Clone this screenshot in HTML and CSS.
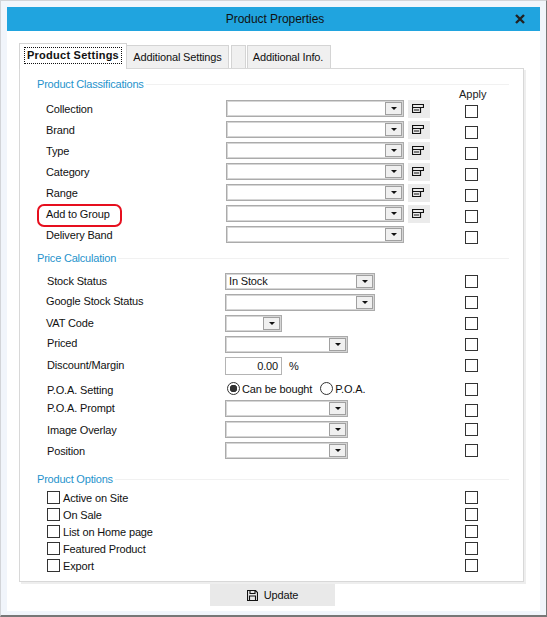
FILE: index.html
```html
<!DOCTYPE html>
<html>
  <head>
    <title>Product Properties</title>
    <link rel="stylesheet" href="styles.css">
  </head>
  <body>
    <div class="frame">
      <div class="window">
        <div class="titlebar">
          <span class="title">Product Properties</span>
          <svg class="close" width="10" height="10" viewBox="0 0 10 10">
            <path d="M1 1 L9 9 M9 1 L1 9" stroke="#222" stroke-width="2.4" fill="none" />
          </svg>
        </div>

        <div class="tabs">
          <div class="tab active"><span class="focus">Product Settings</span></div>
          <div class="tab second">Additional Settings</div>
          <div class="tab blank"></div>
          <div class="tab fourth">Additional Info.</div>
        </div>

        <div class="panel">
          <div class="legend"><span>Product Classifications</span><i></i></div>
          <div class="applyhead">Apply</div>

          <div class="row classif">
            <label>Collection</label>
            <div class="field"><div class="combo w178"><b></b></div><div class="iconbtn"><svg width="12" height="9" viewBox="0 0 12 9"><path d="M0.5 0.5 H11.5 V3.5 H8.5 V8.5 H0.5 Z M0.5 3.5 H8.5 M2 6 H7" stroke="#111" stroke-width="1.2" fill="none" /></svg></div></div>
            <div class="chk"></div>
          </div>
          <div class="row classif">
            <label>Brand</label>
            <div class="field"><div class="combo w178"><b></b></div><div class="iconbtn"><svg width="12" height="9" viewBox="0 0 12 9"><path d="M0.5 0.5 H11.5 V3.5 H8.5 V8.5 H0.5 Z M0.5 3.5 H8.5 M2 6 H7" stroke="#111" stroke-width="1.2" fill="none" /></svg></div></div>
            <div class="chk"></div>
          </div>
          <div class="row classif">
            <label>Type</label>
            <div class="field"><div class="combo w178"><b></b></div><div class="iconbtn"><svg width="12" height="9" viewBox="0 0 12 9"><path d="M0.5 0.5 H11.5 V3.5 H8.5 V8.5 H0.5 Z M0.5 3.5 H8.5 M2 6 H7" stroke="#111" stroke-width="1.2" fill="none" /></svg></div></div>
            <div class="chk"></div>
          </div>
          <div class="row classif">
            <label>Category</label>
            <div class="field"><div class="combo w178"><b></b></div><div class="iconbtn"><svg width="12" height="9" viewBox="0 0 12 9"><path d="M0.5 0.5 H11.5 V3.5 H8.5 V8.5 H0.5 Z M0.5 3.5 H8.5 M2 6 H7" stroke="#111" stroke-width="1.2" fill="none" /></svg></div></div>
            <div class="chk"></div>
          </div>
          <div class="row classif">
            <label>Range</label>
            <div class="field"><div class="combo w178"><b></b></div><div class="iconbtn"><svg width="12" height="9" viewBox="0 0 12 9"><path d="M0.5 0.5 H11.5 V3.5 H8.5 V8.5 H0.5 Z M0.5 3.5 H8.5 M2 6 H7" stroke="#111" stroke-width="1.2" fill="none" /></svg></div></div>
            <div class="chk"></div>
          </div>
          <div class="row classif">
            <label class="ringed">Add to Group</label>
            <div class="field"><div class="combo w178"><b></b></div><div class="iconbtn"><svg width="12" height="9" viewBox="0 0 12 9"><path d="M0.5 0.5 H11.5 V3.5 H8.5 V8.5 H0.5 Z M0.5 3.5 H8.5 M2 6 H7" stroke="#111" stroke-width="1.2" fill="none" /></svg></div></div>
            <div class="chk"></div>
          </div>
          <div class="row classif">
            <label>Delivery Band</label>
            <div class="field"><div class="combo w178"><b></b></div></div>
            <div class="chk"></div>
          </div>

          <div class="legend price-legend"><span>Price Calculation</span><i></i></div>

          <div class="row price">
            <label class="nudge">Stock Status</label>
            <div class="field"><div class="combo w150">In Stock<b></b></div></div>
            <div class="chk"></div>
          </div>
          <div class="row price">
            <label class="up">Google Stock Status</label>
            <div class="field"><div class="combo w150"><b></b></div></div>
            <div class="chk"></div>
          </div>
          <div class="row price">
            <label>VAT Code</label>
            <div class="field"><div class="combo w57"><b></b></div></div>
            <div class="chk"></div>
          </div>
          <div class="row price">
            <label class="nudge up">Priced</label>
            <div class="field"><div class="combo w123"><b></b></div></div>
            <div class="chk"></div>
          </div>
          <div class="row price">
            <label class="nudge">Discount/Margin</label>
            <div class="field"><div class="amount">0.00</div><span class="pct">%</span></div>
            <div class="chk"></div>
          </div>
          <div class="row price poa">
            <label class="nudge down">P.O.A. Setting</label>
            <div class="field radios">
              <span class="radio on"></span><span class="rtext">Can be bought</span>
              <span class="radio"></span><span class="rtext">P.O.A.</span>
            </div>
            <div class="chk"></div>
          </div>
          <div class="row price">
            <label class="nudge">P.O.A. Prompt</label>
            <div class="field"><div class="combo w123"><b></b></div></div>
            <div class="chk low"></div>
          </div>
          <div class="row price">
            <label class="nudge level">Image Overlay</label>
            <div class="field"><div class="combo w123"><b></b></div></div>
            <div class="chk"></div>
          </div>
          <div class="row price">
            <label class="nudge level">Position</label>
            <div class="field"><div class="combo w123"><b></b></div></div>
            <div class="chk"></div>
          </div>

          <div class="legend options-legend"><span>Product Options</span><i></i></div>

          <div class="optrows">
            <div class="row option"><div class="opt"><div class="chk"></div><label>Active on Site</label></div><div class="chk"></div></div>
            <div class="row option"><div class="opt"><div class="chk"></div><label>On Sale</label></div><div class="chk"></div></div>
            <div class="row option"><div class="opt"><div class="chk"></div><label>List on Home page</label></div><div class="chk"></div></div>
            <div class="row option"><div class="opt"><div class="chk"></div><label>Featured Product</label></div><div class="chk"></div></div>
            <div class="row option"><div class="opt"><div class="chk"></div><label>Export</label></div><div class="chk"></div></div>
          </div>
        </div>

        <div class="footer">
          <div class="update">
            <svg width="11" height="11" viewBox="0 0 11 11"><path d="M0.5 0.5 H8.5 L10.5 2.5 V10.5 H0.5 Z M3 0.5 V3.5 H8 V0.5 M2.5 10.5 V6 H8.5 V10.5" stroke="#111" stroke-width="1.1" fill="none" /></svg>
            <span>Update</span>
          </div>
        </div>
      </div>
    </div>
  </body>
</html>
```

FILE: styles.css
```css
html,
body {
  margin: 0;
  padding: 0;
}

body {
  font-family: "Liberation Sans", Arial, sans-serif;
  font-size: 11px;
  letter-spacing: -0.15px;
  color: #111;
}

.frame {
  box-sizing: border-box;
  width: 547px;
  height: 617px;
  padding: 6px 6px 4px 6px;
  background: #f1f5fb;
  border-top: 1px solid #d2d4d8;
  border-left: 1px solid #d2d4d8;
  border-right: 1px solid #777;
  border-bottom: 2px solid #777;
}

.window {
  height: 604px;
  background: #fff;
}

.titlebar {
  height: 24px;
  background: #20a4df;
  display: flex;
  align-items: center;
  justify-content: center;
  padding-left: 3px;
  position: relative;
}

.title {
  font-size: 12px;
  letter-spacing: -0.05px;
  color: #111;
}

.close {
  position: absolute;
  right: 15px;
  top: 7px;
}

.tabs {
  display: flex;
  align-items: flex-end;
  height: 25px;
  margin: 12px 0 0 12px;
  position: relative;
  z-index: 1;
}

.tab {
  box-sizing: border-box;
  height: 23px;
  line-height: 22px;
  background: #f0f0f0;
  border: 1px solid #d4d4d4;
  border-bottom: none;
  text-align: center;
}

.tab.active {
  width: 108px;
  height: 26px;
  margin-bottom: -1px;
  padding-top: 3px;
  background: #fff;
  font-weight: bold;
  letter-spacing: 0.25px;
  line-height: 15px;
}

.focus {
  display: inline-block;
  padding: 0 2px;
  border: 1px dotted #111;
}

.tab.second {
  width: 102px;
  border-left: none;
}

.tab.blank {
  width: 15px;
  margin-left: 2px;
}

.tab.fourth {
  width: 84px;
  margin-left: 1px;
  padding-right: 2px;
}

.panel {
  box-sizing: border-box;
  width: 505px;
  height: 514px;
  margin-left: 12px;
  padding-top: 7px;
  border: 1px solid #d8d8d8;
  box-shadow: 2px 2px 0 #eeeeee;
}

.legend {
  display: flex;
  align-items: center;
  height: 16px;
  padding-left: 17px;
  margin-right: 14px;
  letter-spacing: -0.2px;
  color: #1f93cc;
}

.legend i {
  flex: 1;
  height: 1px;
  margin-left: 2px;
  background: #f1f1f1;
}

.price-legend {
  margin: 5px 14px 5px 0;
}

.options-legend {
  margin-top: 10px;
}

.applyhead {
  height: 8px;
  margin-top: -2px;
  line-height: 8px;
  padding-left: 439px;
  letter-spacing: 0;
  color: #222;
}

.row {
  box-sizing: border-box;
  display: grid;
  height: 21px;
  padding-left: 26px;
  align-items: center;
}

.classif {
  grid-template-columns: 180px 239px 13px;
}

.classif .chk {
  margin-top: 6px;
}

.price {
  grid-template-columns: 179px 240px 13px;
}

.price label {
  padding-bottom: 2px;
}

.price label.up {
  padding-bottom: 4px;
}

.price label.down {
  padding: 2px 0 0 1px;
}

.price label.level {
  padding-bottom: 0;
}

.poa {
  height: 22px;
  padding-top: 4px;
}

.nudge {
  padding-left: 1px;
}

.field {
  display: flex;
  align-items: center;
}

.combo {
  box-sizing: border-box;
  height: 17px;
  line-height: 15px;
  padding-left: 3px;
  border: 1px solid #ababab;
  box-shadow: inset 0 0 0 1px #d6d6d6;
  position: relative;
}

.combo b {
  position: absolute;
  right: 1px;
  top: 1px;
  box-sizing: border-box;
  width: 17px;
  height: 13px;
  background: #f0f0f0;
  border: 1px solid #a0a0a0;
}

.combo b::after {
  content: "";
  position: absolute;
  left: 5px;
  top: 4px;
  border-left: 3px solid transparent;
  border-right: 3px solid transparent;
  border-top: 3px solid #111;
}

.w178 {
  width: 178px;
}

.w150 {
  width: 150px;
}

.w123 {
  width: 123px;
}

.w57 {
  width: 57px;
}

.iconbtn {
  display: flex;
  align-items: center;
  justify-content: center;
  box-sizing: border-box;
  width: 22px;
  height: 18px;
  margin-left: 4px;
  padding-right: 2px;
  background: #ebebeb;
}

.amount {
  box-sizing: border-box;
  width: 57px;
  height: 18px;
  line-height: 16px;
  padding-right: 3px;
  text-align: right;
  border: 1px solid #b4b4b4;
}

.pct {
  margin-left: 7px;
}

.radios {
  margin-top: -1px;
  padding-left: 2px;
}

.radio {
  box-sizing: border-box;
  width: 13px;
  height: 13px;
  border: 1px solid #333;
  border-radius: 50%;
  background: #fff;
}

.radio.on {
  background: radial-gradient(circle, #333 0 3.5px, #fff 4px);
}

.rtext {
  margin: 0 8px 0 2px;
}

.chk {
  box-sizing: border-box;
  width: 13px;
  height: 13px;
  border: 1px solid #333;
  background: #fff;
}

.chk.low {
  margin-top: 4px;
}

.optrows {
  margin-top: 2px;
}

.option {
  height: 17px;
  padding-left: 27px;
  grid-template-columns: 418px 13px;
}

.opt {
  display: flex;
  align-items: center;
  gap: 3px;
}

.ringed {
  position: relative;
}

.ringed::after {
  content: "";
  position: absolute;
  left: -9px;
  top: -4px;
  width: 81px;
  height: 19px;
  border: 2px solid #e60f1e;
  border-radius: 7px;
}

.footer {
  display: flex;
  justify-content: center;
  margin: 2px 2px 0 0;
}

.update {
  display: flex;
  align-items: center;
  justify-content: center;
  gap: 6px;
  width: 125px;
  height: 22px;
  background: #e9e9e9;
}
```
